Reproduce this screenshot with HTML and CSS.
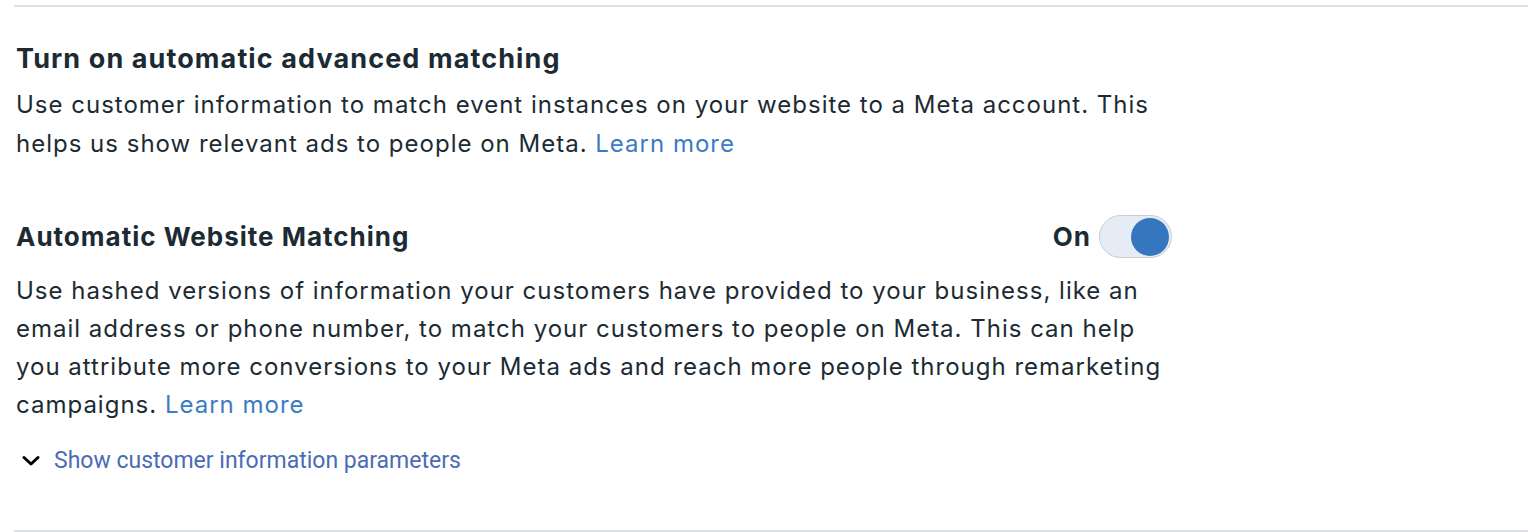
FILE: index.html
```html
<!DOCTYPE html>
<html>
<head>
<meta charset="utf-8">
<link rel="stylesheet" href="styles.css">
</head>
<body>
<div class="page">
  <div class="divider"></div>
  <section class="content">
    <h2 class="title">Turn on automatic advanced matching</h2>
    <p class="desc">Use customer information to match event instances on your website to a Meta account. This helps us show relevant ads to people on Meta. <a class="link" href="#">Learn more</a></p>

    <div class="row">
      <h3 class="subtitle">Automatic Website Matching</h3>
      <div class="toggle-wrap">
        <span class="toggle-label">On</span>
        <span class="toggle"><span class="knob"></span></span>
      </div>
    </div>
    <p class="desc desc2">Use hashed versions of information your customers have provided to your business, like an email address or phone number, to match your customers to people on Meta. This can help you attribute more conversions to your Meta ads and reach more people through remarketing campaigns. <a class="link" href="#">Learn more</a></p>

    <div class="disclosure">
      <svg class="chev" width="18" height="12" viewBox="0 0 18 12"><path d="M2 2.5 L9 9 L16 2.5" fill="none" stroke="#000" stroke-width="3" stroke-linecap="round" stroke-linejoin="round"/></svg>
      <a class="disc-link" href="#">Show customer information parameters</a>
    </div>
  </section>
  <div class="divider"></div>
</div>
</body>
</html>
```
FILE: styles.css
```css
html, body { margin: 0; padding: 0; background: #fff; }
body { font-family: "Inter", "Noto Sans", sans-serif; color: #1c2b33; }
.page { width: 1536px; height: 532px; overflow: hidden; padding-top: 5px; box-sizing: border-box; }
.divider { height: 2px; background: #dfe0e3; margin: 0 8px 0 14px; }
.content { padding: 34px 16px 55px; width: 1156px; }
.title { margin: 0; font-size: 27px; line-height: 36px; font-weight: 700; letter-spacing: 1.1px; }
.desc { margin: 8px 0 0; font-size: 24px; line-height: 39px; font-weight: 400; letter-spacing: 1px; }
.link { color: #3b7bc4; text-decoration: none; }
.row { display: flex; justify-content: space-between; align-items: center; margin-top: 52px; }
.subtitle { margin: 0; font-size: 26px; line-height: 36px; font-weight: 700; letter-spacing: 1px; }
.toggle-wrap { display: flex; align-items: center; gap: 8px; }
.toggle-label { font-size: 26px; font-weight: 700; letter-spacing: 1px; }
.toggle { width: 73px; height: 43px; border: 1.5px solid #c9cdd3; border-radius: 22px; background: #e5ecf6; display: flex; align-items: center; justify-content: flex-end; padding-right: 2px; box-sizing: border-box; }
.knob { width: 38px; height: 38px; border-radius: 50%; background: #3576bf; }
.desc2 { margin-top: 14px; line-height: 38px; }
.disclosure { display: flex; align-items: center; gap: 14px; margin-top: 23px; padding-left: 6px; height: 28px; }
.chev { display: block; }
.disc-link { font-family: "Roboto", sans-serif; font-size: 23px; line-height: 28px; color: #4a6cb5; text-decoration: none; }
```
